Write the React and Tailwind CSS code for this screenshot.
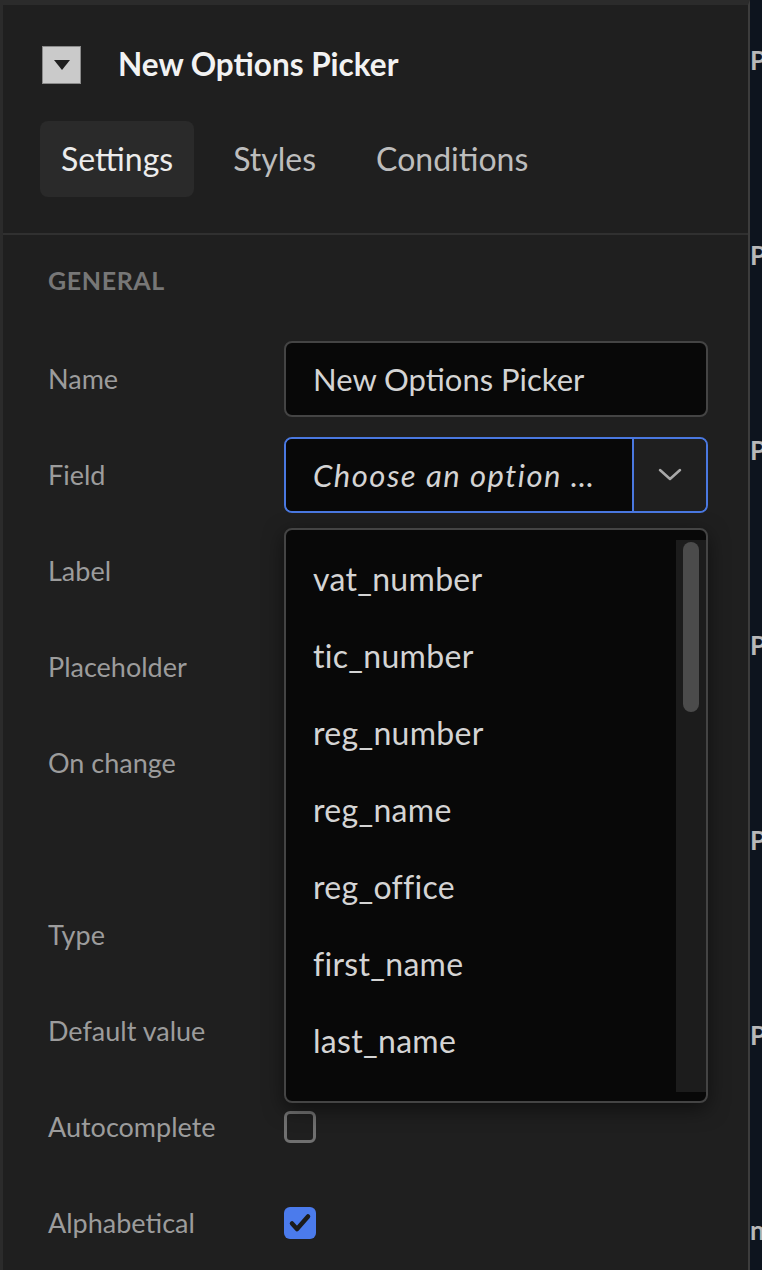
import React from "react";

const items = ["vat_number", "tic_number", "reg_number", "reg_name", "reg_office", "first_name", "last_name"];

const Row = ({ label, tall, children }) => (
  <div className={`flex ${tall ? "h-[152px]" : "h-[76px]"}`}>
    <div className="w-[236px] h-[76px] flex items-center text-[27px] text-[#9c9c9c]">{label}</div>
    <div className="w-[424px] relative">{children}</div>
  </div>
);

const Input = ({ value, tall }) => (
  <div
    className={`w-full ${tall ? "h-[152px]" : "h-[76px]"} bg-[#080808] border-2 border-[#444] rounded-lg flex items-center pl-[27px] text-[31px] text-[#d4d4d4]`}
  >
    {value}
  </div>
);

const Checkbox = ({ checked }) =>
  checked ? (
    <div className="w-[32px] h-[32px] rounded-md bg-[#4b7bec] flex items-center justify-center">
      <svg width="24" height="24" viewBox="0 0 24 24" fill="none" stroke="#1b1b1b" strokeWidth="4.5" strokeLinecap="round" strokeLinejoin="round">
        <path d="M4 12.5l5 5.5L20 5.5" />
      </svg>
    </div>
  ) : (
    <div className="w-[32px] h-[32px] rounded-md border-[3px] border-[#707070]" />
  );

export default function App() {
  return (
    <div className="w-[762px] h-[1270px] flex overflow-hidden bg-[#1f1f1f]" style={{ fontFamily: "Lato, 'Open Sans', sans-serif" }}>
      {/* panel */}
      <div className="w-[750px] h-full flex flex-col border-t-[5px] border-l-[3px] border-r-2 border-t-[#2b2b2b] border-l-[#2b2b2b] border-r-[#3c3c3c]">
        {/* header */}
        <div className="flex items-center pl-[39px] pt-[36px]">
          <div className="w-[39px] h-[38px] bg-[#cacaca] border border-[#8a8a8a] flex items-center justify-center">
            <svg width="18" height="12" viewBox="0 0 18 12">
              <path d="M1 1h16L9 11z" fill="#1f1f1f" />
            </svg>
          </div>
          <div className="ml-[37px] text-[31.5px] font-bold text-[#f2f2f2]">New Options Picker</div>
        </div>

        {/* tabs */}
        <div className="flex gap-[18px] pl-[37px] mt-[33px]">
          <div className="h-[76px] px-[21px] flex items-center rounded-lg bg-[#2a2a2a] text-[32px] text-[#ececec]">Settings</div>
          <div className="h-[76px] px-[21px] flex items-center text-[32px] text-[#bdbdbd]">Styles</div>
          <div className="h-[76px] px-[21px] flex items-center text-[32px] text-[#bdbdbd]">Conditions</div>
        </div>

        <div className="mt-[36px] h-[2px] bg-[#303030]" />

        {/* general */}
        <div className="pl-[45px] pt-[30px]">
          <div className="h-[30px] flex items-center text-[25px] font-bold tracking-wide text-[#777]">GENERAL</div>

          <div className="mt-[46px] flex flex-col gap-[20px]">
            <Row label="Name">
              <Input value="New Options Picker" />
            </Row>

            <Row label="Field">
              <div className="w-full h-[76px] flex border-2 border-[#4a78e0] rounded-lg overflow-hidden">
                <div className="flex-1 bg-[#080808] flex items-center pl-[27px] text-[31px] italic tracking-[1.5px] text-[#d4d4d4]">Choose an option …</div>
                <div className="w-[74px] border-l-2 border-[#4a78e0] bg-[#1f1f1f] flex items-center justify-center">
                  <svg width="26" height="16" viewBox="0 0 26 16" fill="none" stroke="#a8a8a8" strokeWidth="2.5" strokeLinecap="round" strokeLinejoin="round">
                    <path d="M3 3l10 9 10-9" />
                  </svg>
                </div>
              </div>

              {/* dropdown menu */}
              <div className="absolute left-0 top-full mt-[15px] w-[424px] h-[575px] z-10 bg-[#080808] border-2 border-[#444] rounded-lg shadow-[0_6px_20px_rgba(0,0,0,0.5)] flex overflow-hidden">
                <div className="flex-1 pt-[10px]">
                  {items.map((it) => (
                    <div key={it} className="h-[77px] flex items-center pl-[27px] text-[32px] tracking-[0.3px] text-[#d4d4d4]">
                      {it}
                    </div>
                  ))}
                </div>
                <div className="w-[30px] mt-[10px] mb-[9px] bg-[#1c1c1c] flex justify-center pt-[2px]">
                  <div className="w-[16px] h-[170px] rounded-full bg-[#4b4b4b]" />
                </div>
              </div>
            </Row>

            <Row label="Label">
              <Input value="" />
            </Row>
            <Row label="Placeholder">
              <Input value="" />
            </Row>
            <Row label="On change" tall>
              <Input value="" tall />
            </Row>
            <Row label="Type">
              <Input value="" />
            </Row>
            <Row label="Default value">
              <Input value="" />
            </Row>
            <Row label="Autocomplete">
              <div className="h-[76px] flex items-center">
                <Checkbox />
              </div>
            </Row>
            <Row label="Alphabetical">
              <div className="h-[76px] flex items-center">
                <Checkbox checked />
              </div>
            </Row>
          </div>
        </div>
      </div>

      {/* canvas edge on the right */}
      <div className="flex-1 h-full bg-[#0d141e] overflow-hidden flex flex-col pt-[44px] gap-[163px] text-[26px] font-bold text-[#b8b8b8] leading-[32px]">
        <span>P</span>
        <span>P</span>
        <span>P</span>
        <span>P</span>
        <span>P</span>
        <span>P</span>
        <span>n</span>
      </div>
    </div>
  );
}
